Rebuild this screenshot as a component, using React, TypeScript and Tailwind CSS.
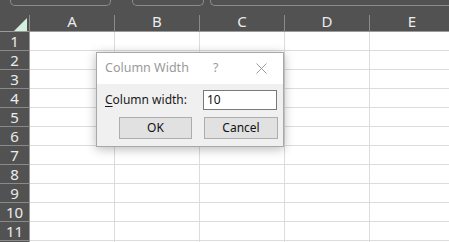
import React from "react";

const cols = ["A", "B", "C", "D", "E"];
const rows = ["1", "2", "3", "4", "5", "6", "7", "8", "9", "10", "11", ""];

export default function App() {
  return (
    <div
      className="relative w-[449px] h-[242px] overflow-hidden bg-white"
      style={{ fontFamily: '"Noto Sans", "Open Sans", sans-serif' }}
    >
      {/* header area */}
      <div className="bg-[#525252] border-b border-[#9a9a9a] h-[32px] flex flex-col">
        <div className="h-[7px] flex items-end">
          <div className="ml-[10px] w-[101px] h-[10px] self-end mb-[1px] border border-t-0 border-[#8c8c8c] rounded-b-[5px]" />
          <div className="ml-[21px] w-[72px] h-[10px] self-end mb-[1px] border border-t-0 border-[#8c8c8c] rounded-b-[5px]" />
          <div className="ml-[6px] flex-1 h-[10px] self-end mb-[1px] border border-t-0 border-r-0 border-[#8c8c8c] rounded-bl-[5px]" />
        </div>
        <div className="flex flex-1">
          <div className="w-[30px] flex items-end">
            <div className="w-[29px] h-full flex items-end justify-end pb-[2px] pr-[2px]">
              <svg width="13" height="13" viewBox="0 0 13 13">
                <polygon points="13,0 13,13 0,13" fill="#d4efdf" />
              </svg>
            </div>
            <div className="w-px h-[18px] bg-[#8a8a8a]" />
          </div>
          {cols.map((c) => (
            <div key={c} className="w-[85px] shrink-0 flex items-end">
              <div className="flex-1 h-full flex items-center justify-center text-[15px] text-[#ececec] pt-[3px]">
                {c}
              </div>
              <div className="w-px h-[18px] bg-[#8a8a8a]" />
            </div>
          ))}
        </div>
      </div>

      {/* grid */}
      {rows.map((r, i) => (
        <div key={i} className="flex h-[19px]">
          <div className="w-[29px] shrink-0 bg-[#525252] border-b border-[#8a8a8a] border-r border-r-[#9a9a9a] flex items-center justify-center text-[15px] text-[#ececec] leading-none box-content">
            {r}
          </div>
          {cols.map((c) => (
            <div
              key={c}
              className="w-[85px] shrink-0 border-r border-b border-[#dcdcdc]"
            />
          ))}
        </div>
      ))}

      {/* dialog */}
      <div className="absolute left-[96px] top-[52px] w-[188px] h-[95px] border border-[#a8a8a8] bg-[#f0f0f0] shadow-[0_2px_10px_rgba(0,0,0,0.28)] flex flex-col text-[12px]">
        <div className="h-[31px] bg-white flex items-center pl-[8px] text-[#9a9a9a] text-[12.5px]">
          <span className="w-[108px]">Column Width</span>
          <span className="w-[38px]">?</span>
          <svg width="11" height="11" viewBox="0 0 11 11" className="ml-[5px]">
            <path d="M0.5 0.5 L10.5 10.5 M10.5 0.5 L0.5 10.5" stroke="#9a9a9a" strokeWidth="1" />
          </svg>
        </div>
        <div className="flex items-center pl-[8px] pt-[6px]">
          <span className="w-[98px] text-[#1a1a1a]">
            <span className="underline underline-offset-2">C</span>olumn width:
          </span>
          <div className="w-[74px] h-[20px] bg-white border border-[#7a7a7a] flex items-center pl-[3px] text-[#111]">
            10
          </div>
        </div>
        <div className="flex pl-[22px] pt-[7px] gap-[12px]">
          <div className="w-[73px] h-[22px] bg-[#e1e1e1] border border-[#adadad] flex items-center justify-center text-[#111]">
            OK
          </div>
          <div className="w-[74px] h-[22px] bg-[#e1e1e1] border border-[#adadad] flex items-center justify-center text-[#111]">
            Cancel
          </div>
        </div>
      </div>
    </div>
  );
}
